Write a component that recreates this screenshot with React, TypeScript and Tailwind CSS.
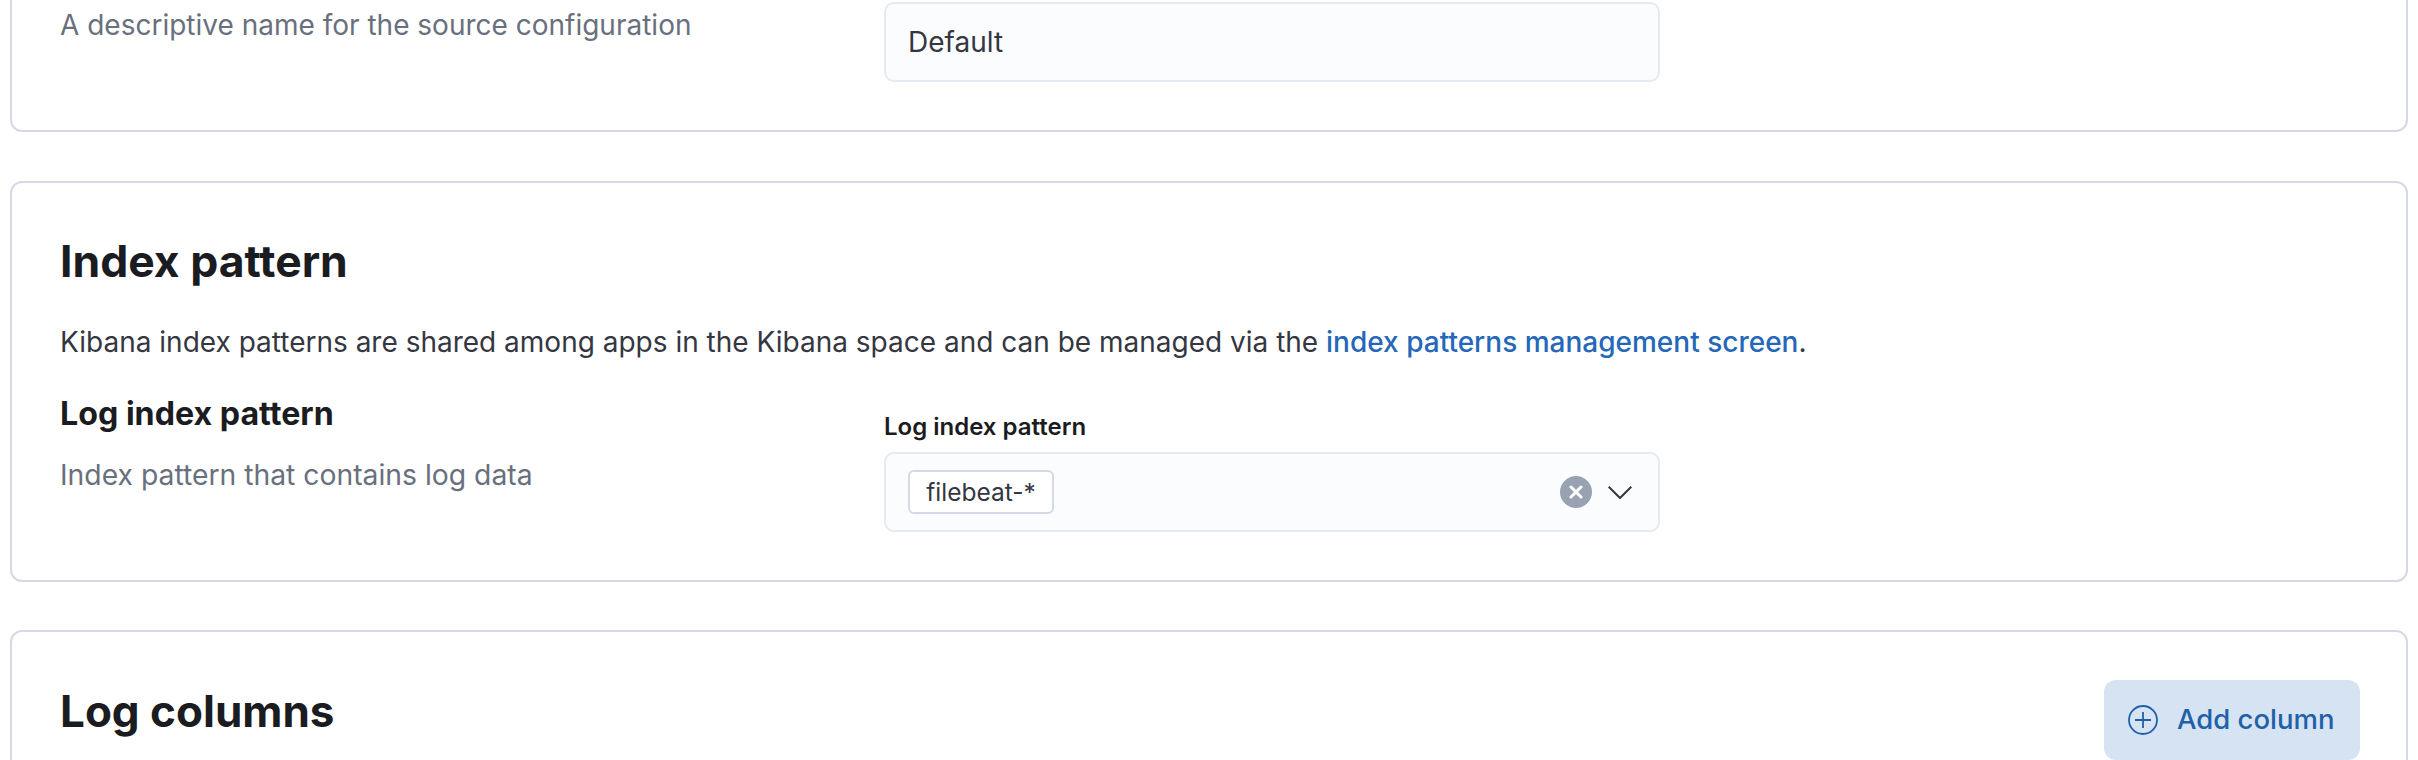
export default function App() {
  return (
    <div className="h-[760px] w-[2418px] overflow-hidden bg-white px-[10px] font-['Inter',sans-serif] text-[#343741]">
      <section className="-mt-[40px] h-[172px] rounded-[12px] border-2 border-[#d3dae6] px-[48px] pt-[40px]">
        <div className="flex">
          <div className="w-[824px] shrink-0 pt-[5px] text-[28px] leading-[36px] text-[#69707d]">
            A descriptive name for the source configuration
          </div>
          <div className="flex h-[80px] w-[776px] items-center rounded-[10px] border-2 border-[#e6e8f2] bg-[#fbfcfd] px-[22px] text-[28px]">
            Default
          </div>
        </div>
      </section>

      <section className="mt-[49px] h-[401px] rounded-[12px] border-2 border-[#d3dae6] px-[48px] pt-[51px]">
        <h2 className="text-[44.5px] font-bold leading-[54px] text-[#1a1c21]">Index pattern</h2>
        <p className="mt-[35px] text-[28px] leading-[38px]">
          Kibana index patterns are shared among apps in the Kibana space and can be managed via the{" "}
          <a className="font-medium text-[#2567b8]">index patterns management screen</a>.
        </p>
        <div className="mt-[34px] flex">
          <div className="w-[824px] shrink-0">
            <h3 className="text-[32.2px] font-bold leading-[38px] text-[#1a1c21]">Log index pattern</h3>
            <p className="mt-[23px] text-[28.3px] leading-[38px] text-[#69707d]">Index pattern that contains log data</p>
          </div>
          <div className="w-[776px]">
            <div className="pt-[17px] text-[24px] font-semibold leading-[30px] text-[#1a1c21]">Log index pattern</div>
            <div className="mt-[10px] flex h-[80px] items-center rounded-[10px] border-2 border-[#e6e8f2] bg-[#fbfcfd] pl-[22px] pr-[26px]">
              <span className="flex h-[44px] w-[146px] items-center justify-center rounded-[6px] border-2 border-[#d3dae6] bg-white text-[24.5px]">
                filebeat-*
              </span>
              <span className="ml-auto flex h-[32px] w-[32px] items-center justify-center rounded-full bg-[#98a2b3]">
                <svg width="14" height="14" viewBox="0 0 14 14" fill="none" stroke="white" strokeWidth="3" strokeLinecap="round">
                  <path d="M2 2L12 12M12 2L2 12" />
                </svg>
              </span>
              <svg className="ml-[16px]" width="24" height="13" viewBox="0 0 24 13" fill="none" stroke="#343741" strokeWidth="2">
                <path d="M0.7 0.7L12 12L23.3 0.7" />
              </svg>
            </div>
          </div>
        </div>
      </section>

      <section className="mt-[48px] h-[200px] rounded-[12px] border-2 border-[#d3dae6] pl-[48px] pr-[46px] pt-[48px]">
        <div className="flex items-start justify-between">
          <h2 className="pt-[4px] text-[44px] font-bold leading-[54px] text-[#1a1c21]">Log columns</h2>
          <button className="flex h-[80px] w-[256px] items-center rounded-[12px] bg-[#d6e3f3] pl-[24px] text-[27.5px] font-medium text-[#2160a8]">
            <svg width="30" height="30" viewBox="0 0 30 30" fill="none" stroke="#2160a8" strokeWidth="1.8">
              <circle cx="15" cy="15" r="14" />
              <path d="M15 7V23M7 15H23" />
            </svg>
            <span className="ml-[19px]">Add column</span>
          </button>
        </div>
      </section>
    </div>
  );
}
